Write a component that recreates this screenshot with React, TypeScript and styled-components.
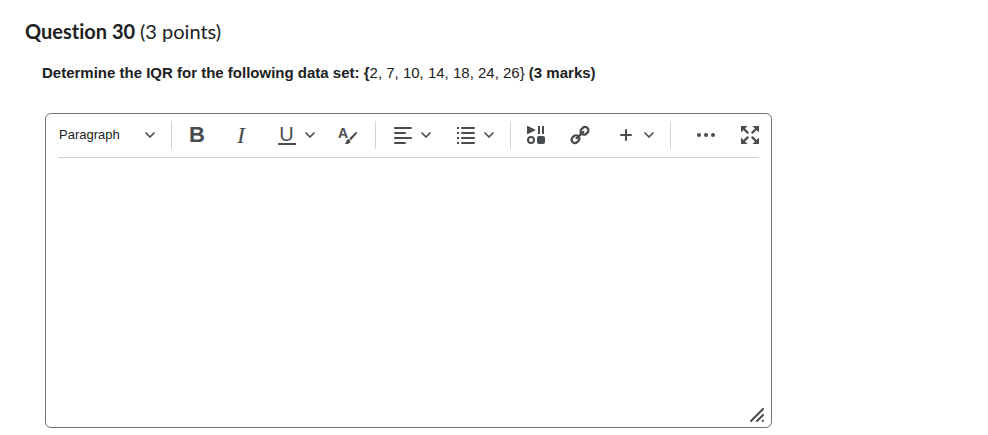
import React from "react";
import styled, { createGlobalStyle } from "styled-components";

const GlobalStyle = createGlobalStyle`
  *, *::before, *::after { box-sizing: border-box; }
  body {
    margin: 0;
    background: #fff;
    color: #202122;
    font-family: "Liberation Sans", Arial, sans-serif;
  }
`;

const INK = "#494c4e";
const RULE = "#cdd5dc";

const Page = styled.main`
  padding: 19px 25px 7px;
`;

const Heading = styled.h2`
  margin: 0;
  font: 700 20px/24px Lato, sans-serif;
  font-variant-ligatures: none;
`;

const Points = styled.span`
  font-weight: 400;
`;

const Body = styled.div`
  padding: 21px 0 0 17px;
`;

const Prompt = styled.p`
  margin: 0 0 31px;
  font-size: 15px;
  line-height: 18px;
`;

const Editor = styled.section`
  display: flex;
  flex-direction: column;
  max-width: 727px;
  margin-left: 3px;
  padding: 0 12px;
  border: 1px solid #6e7477;
  border-radius: 6px;
`;

const Toolbar = styled.div`
  display: flex;
  align-items: center;
  height: 44px;
  padding-bottom: 1px;
  border-bottom: 1px solid ${RULE};
`;

const Group = styled.div<{ $gap?: number }>`
  display: flex;
  align-items: center;
  gap: ${(p) => p.$gap ?? 0}px;
  height: 28px;
  padding: 0 6px 0 3px;
  border-right: 1px solid ${RULE};
`;

const EndGroup = styled.div`
  display: flex;
  flex: 1;
  align-items: center;
  justify-content: flex-end;
  gap: 17px;
`;

const FormatPicker = styled.label`
  display: grid;
  grid-template-columns: 1fr 26px;
  align-items: center;
  width: 114px;
  height: 28px;
  border-right: 1px solid ${RULE};

  svg {
    grid-area: 1 / 2;
    pointer-events: none;
  }
`;

const FormatSelect = styled.select`
  grid-area: 1 / 1 / 2 / 3;
  height: 28px;
  padding: 0 26px 0 1px;
  border: 0;
  background: transparent;
  color: #202122;
  font: 13px/18px "Liberation Sans", Arial, sans-serif;
  appearance: none;
`;

const ToolButton = styled.button<{ $width: number; $menu?: boolean }>`
  display: flex;
  align-items: center;
  justify-content: center;
  gap: 9px;
  width: ${(p) => p.$width}px;
  height: 28px;
  padding: 0 0 0 ${(p) => (p.$menu ? 4 : 0)}px;
  border: 0;
  background: transparent;
  color: ${INK};

  svg {
    flex: none;
    overflow: visible;
  }
`;

const Glyph = styled.span<{ $italic?: boolean }>`
  font: ${(p) =>
    p.$italic
      ? 'italic 400 24px/28px "Liberation Serif", serif'
      : '700 22px/28px "Liberation Sans", Arial, sans-serif'};
`;

const TextArea = styled.textarea`
  display: block;
  width: 100%;
  height: 249px;
  padding: 12px 0;
  border: 0;
  outline: 0;
  resize: none;
  background: transparent;
  font: 14px/20px "Liberation Sans", Arial, sans-serif;
`;

const Footer = styled.div`
  display: flex;
  justify-content: flex-end;
  height: 20px;
  margin-right: -7px;
`;

const Underlined = styled.span`
  width: 18px;
  height: 20px;
  border-bottom: 2px solid ${INK};
  font: 400 20px/18px "Liberation Sans", Arial, sans-serif;
  text-align: center;
`;

const StyledLetter = styled.span`
  display: flex;
  width: 18px;
  height: 20px;
  font: 700 14px/16px "Liberation Sans", Arial, sans-serif;

  svg {
    margin: 7px 0 0 -3px;
  }
`;

type IconProps = { children: React.ReactNode; w?: number; h?: number };

const Icon = ({ children, w = 18, h = 18 }: IconProps) => (
  <svg width={w} height={h} viewBox={`0 0 ${w} ${h}`} fill="none" stroke={INK} strokeWidth="2" aria-hidden="true">
    {children}
  </svg>
);

const Chevron = () => (
  <Icon w={10} h={6}>
    <path d="M1 1l4 4 4-4" strokeWidth="1.7" strokeLinecap="round" strokeLinejoin="round" />
  </Icon>
);

const BrushIcon = () => (
  <Icon w={12} h={12}>
    <path d="M11.7 .3c.5 .5 .3 1 0 1.400L6 8.300 4.200 6.500 10.600 .3c.4-.3 .8-.3 1.100 0zM3.600 7l1.900 1.900c-.1 2.300-2.200 3.300-5.500 3.100 1.300-1.500 1.200-4.500 3.600-5z" fill={INK} stroke="none" />
  </Icon>
);

const AlignIcon = () => (
  <Icon>
    <path d="M1 2h16M1 7h10M1 12h16M1 17h10" strokeLinecap="round" />
  </Icon>
);

const ListIcon = () => (
  <Icon>
    <path d="M5 2h12M5 7h12M5 12h12M5 17h12" strokeLinecap="round" />
    <path d="M0 2h2M0 7h2M0 12h2M0 17h2" />
  </Icon>
);

const MediaIcon = () => (
  <Icon>
    <path d="M0 .5v7c0 .5 .4 .6 .8 .4l7.200-3.400c.5-.3 .5-.7 0-1L.8 .1C.4-.1 0 .1 0 .5z" fill={INK} stroke="none" />
    <path d="M12 0v8M16 0v8" />
    <circle cx="4" cy="14" r="3" />
    <rect x="10" y="10" width="8" height="8" rx="2" fill={INK} stroke="none" />
  </Icon>
);

const LinkIcon = () => (
  <Icon>
    <g transform="rotate(-43 9 9)">
      <rect x="-1.3" y="5.7" width="8.3" height="6.6" rx="3.3" strokeWidth="2.300" />
      <rect x="11" y="5.700" width="8.300" height="6.600" rx="3.300" strokeWidth="2.300" />
      <path d="M4.500 9h9" strokeWidth="2.400" strokeLinecap="round" />
    </g>
  </Icon>
);

const PlusIcon = () => (
  <Icon>
    <path d="M9 4v10M4 9h10" strokeLinecap="round" />
  </Icon>
);

const DotsIcon = () => (
  <Icon>
    <g fill={INK} stroke="none">
      <circle cx="2" cy="9" r="2" />
      <circle cx="9" cy="9" r="2" />
      <circle cx="16" cy="9" r="2" />
    </g>
  </Icon>
);

const ExpandIcon = () => (
  <Icon>
    <path d="M3 3l3.600 3.600M15 3l-3.600 3.600M3 15l3.600-3.600M15 15l-3.600-3.600" strokeWidth="2.300" strokeLinecap="round" />
    <path d="M0 0h6.500L0 6.500zM18 0v6.500l-6.500-6.500zM0 18v-6.500l6.500 6.500zM18 18h-6.500l6.500-6.500z" fill={INK} stroke="none" />
  </Icon>
);

const ResizeIcon = () => (
  <Icon w={16} h={16}>
    <path d="M1 14L13 2M7 14l6-6M12.700 14l.3-.3" strokeLinecap="round" />
  </Icon>
);

type ToolProps = { label: string; menu?: boolean; width?: number; children: React.ReactNode };

const Tool = ({ label, menu, width = 44, children }: ToolProps) => (
  <ToolButton type="button" aria-label={label} title={label} aria-haspopup={menu ? "menu" : undefined} $menu={menu} $width={menu ? 62 : width}>
    {children}
    {menu && <Chevron />}
  </ToolButton>
);

export default function App() {
  return (
    <>
      <GlobalStyle />
      <Page>
        <Heading>
          Question 30 <Points>(3 points)</Points>
        </Heading>
        <Body>
          <Prompt>
            <b>Determine the IQR for the following data set: {"{"}</b>2, 7, 10, 14, 18, 24, 26{"}"} <b>(3 marks)</b>
          </Prompt>
          <Editor aria-label="Answer editor">
            <Toolbar role="toolbar" aria-label="Formatting">
              <FormatPicker>
                <FormatSelect aria-label="Format" defaultValue="Paragraph">
                  <option>Paragraph</option>
                </FormatSelect>
                <Chevron />
              </FormatPicker>
              <Group>
                <Tool label="Bold"><Glyph>B</Glyph></Tool>
                <Tool label="Italic"><Glyph $italic>I</Glyph></Tool>
                <Tool label="Underline" menu><Underlined>U</Underlined></Tool>
                <Tool label="Text style"><StyledLetter>A<BrushIcon /></StyledLetter></Tool>
              </Group>
              <Group $gap={1}>
                <Tool label="Alignment" menu><AlignIcon /></Tool>
                <Tool label="List" menu><ListIcon /></Tool>
              </Group>
              <Group>
                <Tool label="Insert stuff"><MediaIcon /></Tool>
                <Tool label="Insert link"><LinkIcon /></Tool>
                <Tool label="Insert" menu><PlusIcon /></Tool>
              </Group>
              <EndGroup>
                <Tool label="More actions" width={36}><DotsIcon /></Tool>
                <Tool label="Full screen" width={18}><ExpandIcon /></Tool>
              </EndGroup>
            </Toolbar>
            <TextArea aria-label="Answer" />
            <Footer>
              <ResizeIcon />
            </Footer>
          </Editor>
        </Body>
      </Page>
    </>
  );
}
